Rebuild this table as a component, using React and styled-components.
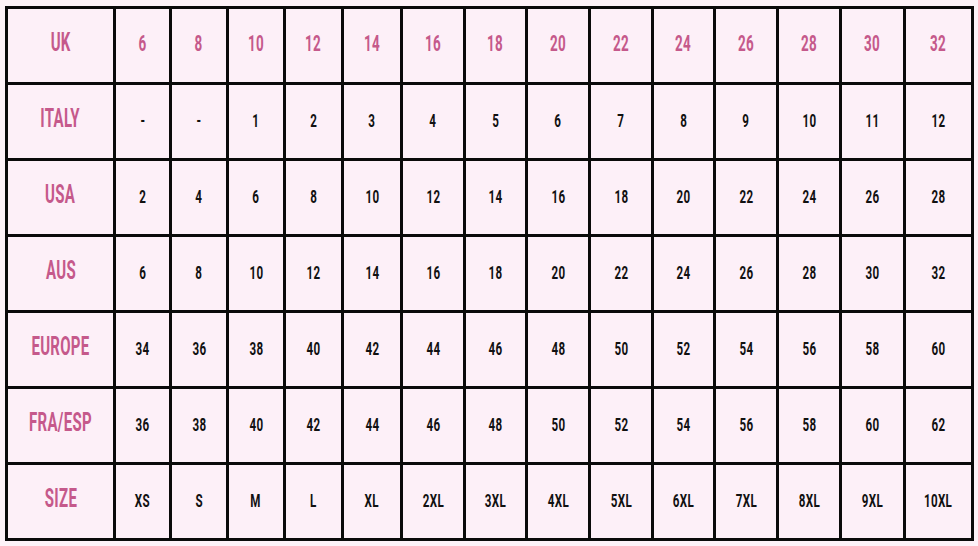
import React from "react";
import styled, { createGlobalStyle } from "styled-components";

const Global = createGlobalStyle`
  html, body { margin: 0; padding: 0; background: #fdf2f8; }
  body { font-family: Roboto, "Liberation Sans", Arial, sans-serif; }
`;

const Page = styled.div`
  padding: 6px 0 0 5px;
`;

const Grid = styled.div`
  display: inline-grid;
  grid-template-columns: 105px 53px 54px 54px 55px 56px 60px 59px 60px 60px 59px 60px 60px 61px 65px;
  grid-auto-rows: 73px;
  gap: 3px;
  padding: 3px;
  background: #0a0a0a;
`;

const Cell = styled.div`
  background: #fdf0f8;
  display: flex;
  align-items: center;
  justify-content: center;
  padding-bottom: ${(p) => (p.$label ? 6 : 3)}px;
  box-sizing: border-box;
`;

const Text = styled.span`
  display: inline-block;
  font-weight: 700;
  line-height: 1;
  white-space: nowrap;
  color: ${(p) => (p.$pink ? "#c5598b" : "#111")};
  font-size: ${(p) => (p.$label ? 25 : p.$pink ? 22 : 19)}px;
  transform: scaleX(${(p) => (p.$label ? 0.6 : 0.61)});
  letter-spacing: 0.5px;
`;

const rows = [
  ["UK", "6", "8", "10", "12", "14", "16", "18", "20", "22", "24", "26", "28", "30", "32"],
  ["ITALY", "-", "-", "1", "2", "3", "4", "5", "6", "7", "8", "9", "10", "11", "12"],
  ["USA", "2", "4", "6", "8", "10", "12", "14", "16", "18", "20", "22", "24", "26", "28"],
  ["AUS", "6", "8", "10", "12", "14", "16", "18", "20", "22", "24", "26", "28", "30", "32"],
  ["EUROPE", "34", "36", "38", "40", "42", "44", "46", "48", "50", "52", "54", "56", "58", "60"],
  ["FRA/ESP", "36", "38", "40", "42", "44", "46", "48", "50", "52", "54", "56", "58", "60", "62"],
  ["SIZE", "XS", "S", "M", "L", "XL", "2XL", "3XL", "4XL", "5XL", "6XL", "7XL", "8XL", "9XL", "10XL"],
];

export default function App() {
  return (
    <>
      <Global />
      <Page>
        <Grid>
          {rows.map((row, r) =>
            row.map((v, c) => (
              <Cell key={`${r}-${c}`} $label={c === 0}>
                <Text $label={c === 0} $pink={c === 0 || r === 0}>
                  {v}
                </Text>
              </Cell>
            ))
          )}
        </Grid>
      </Page>
    </>
  );
}
